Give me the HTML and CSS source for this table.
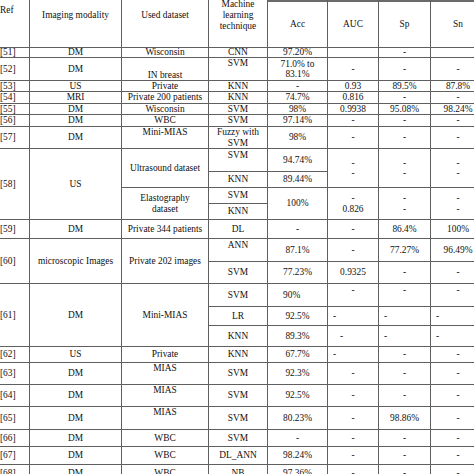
FILE: index.html
```html
<!DOCTYPE html>
<html>
<head>
<meta charset="utf-8">
<link rel="stylesheet" href="styles.css">
</head>
<body>
<div class="tbl">
  <div class="c h ref hr">Ref</div>
  <div class="c h hm">Imaging modality</div>
  <div class="c h hm">Used dataset</div>
  <div class="c h ht">Machine<br>learning<br>technique</div>
  <div class="c h mt">Acc</div>
  <div class="c h mt">AUC</div>
  <div class="c h mt">Sp</div>
  <div class="c h mt">Sn</div>

  <div class="c ref">[51]</div><div class="c">DM</div><div class="c">Wisconsin</div><div class="c">CNN</div><div class="c">97.20%</div><div class="c"></div><div class="c">-</div><div class="c"></div>

  <div class="c ref">[52]</div><div class="c">DM</div><div class="c b">IN breast</div><div class="c t">SVM</div><div class="c">71.0% to<br>83.1%</div><div class="c">-</div><div class="c">-</div><div class="c">-</div>

  <div class="c ref">[53]</div><div class="c">US</div><div class="c">Private</div><div class="c">KNN</div><div class="c">-</div><div class="c">0.93</div><div class="c">89.5%</div><div class="c">87.8%</div>

  <div class="c ref">[54]</div><div class="c">MRI</div><div class="c">Private 200 patients</div><div class="c">KNN</div><div class="c">74.7%</div><div class="c">0.816</div><div class="c">-</div><div class="c">-</div>

  <div class="c ref">[55]</div><div class="c">DM</div><div class="c">Wisconsin</div><div class="c">SVM</div><div class="c">98%</div><div class="c">0.9938</div><div class="c">95.08%</div><div class="c">98.24%</div>

  <div class="c ref">[56]</div><div class="c">DM</div><div class="c">WBC</div><div class="c">SVM</div><div class="c">97.14%</div><div class="c">-</div><div class="c">-</div><div class="c">-</div>

  <div class="c ref">[57]</div><div class="c">DM</div><div class="c t">Mini-MIAS</div><div class="c">Fuzzy with<br>SVM</div><div class="c">98%</div><div class="c">-</div><div class="c">-</div><div class="c">-</div>

  <div class="c ref r4">[58]</div><div class="c r4">US</div><div class="c r2">Ultrasound dataset</div><div class="c t1">SVM</div><div class="c">94.74%</div><div class="c r2">-<br>-</div><div class="c r2">-<br>-</div><div class="c r2">-<br>-</div>
  <div class="c">KNN</div><div class="c">89.44%</div>
  <div class="c r2">Elastography<br>dataset</div><div class="c">SVM</div><div class="c r2">100%</div><div class="c r2">-<br>0.826</div><div class="c r2">-<br>-</div><div class="c r2">-<br>-</div>
  <div class="c">KNN</div>

  <div class="c ref">[59]</div><div class="c">DM</div><div class="c">Private 344 patients</div><div class="c">DL</div><div class="c">-</div><div class="c">-</div><div class="c">86.4%</div><div class="c">100%</div>

  <div class="c ref r2">[60]</div><div class="c r2">microscopic Images</div><div class="c r2">Private 202 images</div><div class="c t1">ANN</div><div class="c">87.1%</div><div class="c">-</div><div class="c">77.27%</div><div class="c">96.49%</div>
  <div class="c">SVM</div><div class="c">77.23%</div><div class="c">0.9325</div><div class="c">-</div><div class="c">-</div>

  <div class="c ref r3">[61]</div><div class="c r3">DM</div><div class="c r3">Mini-MIAS</div><div class="c">SVM</div><div class="c acc-l">90%</div><div class="c t1">-</div><div class="c t1">-</div><div class="c t1">-</div>
  <div class="c">LR</div><div class="c">92.5%</div><div class="c l">-</div><div class="c l">-</div><div class="c l">-</div>
  <div class="c">KNN</div><div class="c">89.3%</div><div class="c l2">-</div><div class="c l">-</div><div class="c l">-</div>

  <div class="c ref">[62]</div><div class="c">US</div><div class="c">Private</div><div class="c">KNN</div><div class="c">67.7%</div><div class="c l">-</div><div class="c">-</div><div class="c">-</div>

  <div class="c ref">[63]</div><div class="c">DM</div><div class="c t">MIAS</div><div class="c">SVM</div><div class="c">92.3%</div><div class="c">-</div><div class="c">-</div><div class="c">-</div>

  <div class="c ref">[64]</div><div class="c">DM</div><div class="c t">MIAS</div><div class="c">SVM</div><div class="c">92.5%</div><div class="c">-</div><div class="c">-</div><div class="c">-</div>

  <div class="c ref">[65]</div><div class="c">DM</div><div class="c t">MIAS</div><div class="c">SVM</div><div class="c">80.23%</div><div class="c">-</div><div class="c">98.86%</div><div class="c">-</div>

  <div class="c ref">[66]</div><div class="c">DM</div><div class="c">WBC</div><div class="c">SVM</div><div class="c">-</div><div class="c">-</div><div class="c">-</div><div class="c">-</div>

  <div class="c ref">[67]</div><div class="c">DM</div><div class="c">WBC</div><div class="c">DL_ANN</div><div class="c">98.24%</div><div class="c">-</div><div class="c">-</div><div class="c">-</div>

  <div class="c ref">[68]</div><div class="c">DM</div><div class="c">WBC</div><div class="c">NB</div><div class="c">97.36%</div><div class="c">-</div><div class="c">-</div><div class="c">-</div>
</div>
</body>
</html>
```

FILE: styles.css
```css
html, body {
  margin: 0;
  padding: 0;
  background: #fff;
  overflow: hidden;
}
body {
  width: 474px;
  height: 474px;
}
.tbl {
  display: grid;
  width: 485px;
  grid-template-columns: 29px 91px 86px 58px 59px 50px 51px 54px;
  grid-template-rows: 47px 9px 22px 10px 11px 10px 11px 21px 22px 15px 15px 15px 18px 22px 21px 22px 18px 20px 15px 21px 21px 22px 16px 17px 17px;
  gap: 1px;
  background: #5f5f5f;
  font-family: "Liberation Serif", "Times New Roman", serif;
  font-size: 9.4px;
  line-height: 10.5px;
  color: #111;
}
.c {
  background: #fff;
  display: flex;
  align-items: center;
  justify-content: center;
  text-align: center;
  white-space: nowrap;
  min-width: 0;
  min-height: 0;
}
.ref {
  justify-content: flex-start;
  text-align: left;
  padding-left: 0;
}
.h { align-items: flex-start; }
.hr { padding-top: 5px; }
.hm { padding-top: 10px; }
.ht { line-height: 11px; margin-top: -1px; padding-top: 0; }
.h.mt {
  align-items: center;
  border-top: 2px solid #6a6a6a;
}
.r2 { grid-row: span 2; }
.r3 { grid-row: span 3; }
.r4 { grid-row: span 4; }
.t { align-items: flex-start; }
.t1 { align-items: flex-start; padding-top: 1px; }
.b { align-items: flex-end; }
.l { justify-content: flex-start; padding-left: 5px; }
.l2 { justify-content: flex-start; padding-left: 12px; }
.acc-l { justify-content: flex-start; padding-left: 15px; }
```
